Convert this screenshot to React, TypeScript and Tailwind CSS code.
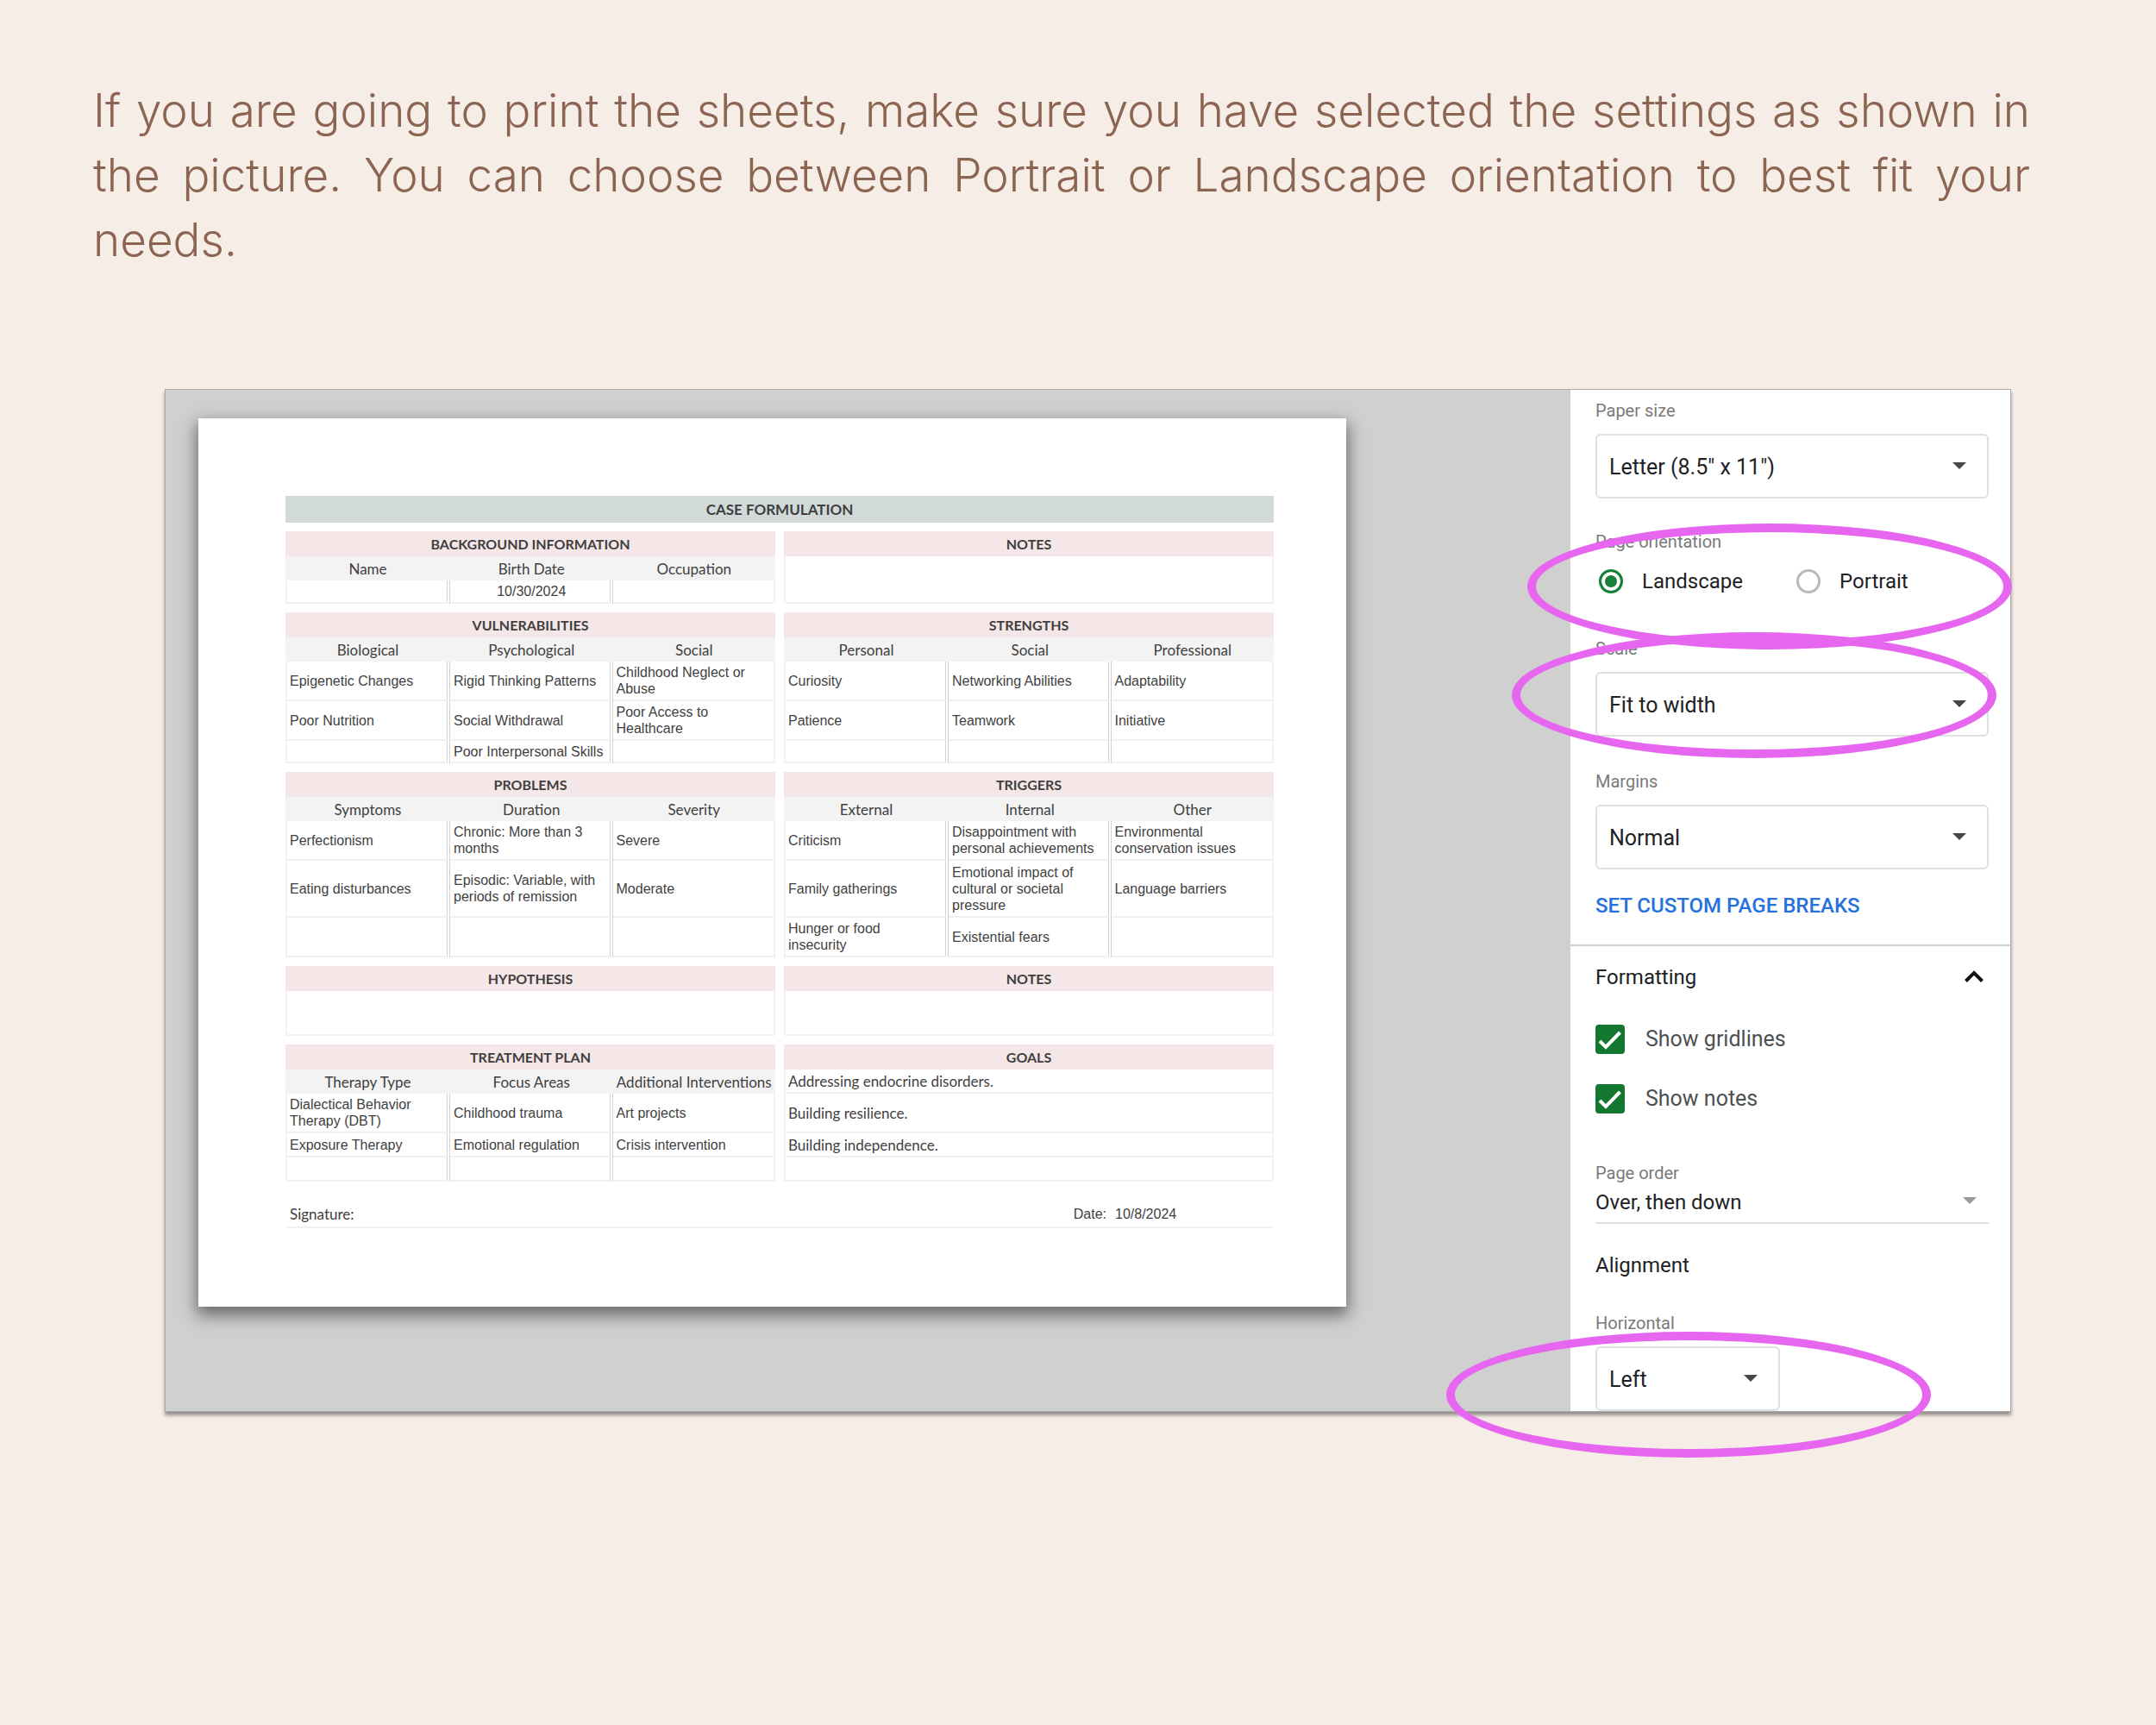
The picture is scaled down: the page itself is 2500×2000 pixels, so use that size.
import React, { useState } from 'react';

type Row = { height: string; cells: string[] };

interface SectionProps {
    title: string;
    columns?: string[];
    rows: Row[];
    centered?: boolean;
    cellFont?: string;
}

const SANS = "text-[16px] font-['Liberation_Sans',sans-serif]";
const LATO = "text-[17px] font-['Lato',sans-serif]";

const Section: React.FC<SectionProps> = ({ title, columns, rows, centered, cellFont = SANS }) => {
    const span = columns ? columns.length : 1;
    return (
        <table className="w-full table-fixed border-separate border-spacing-0 leading-[19px] text-[#3f3f3f]">
            {columns && (
                <colgroup>
                    <col className="w-[191px]" />
                    <col />
                    <col />
                </colgroup>
            )}
            <thead className="font-['Lato',sans-serif]">
                <tr className="h-[29px]">
                    <th colSpan={span} className="bg-[#f5e6e7] p-0 text-center text-[16px] font-bold">{title}</th>
                </tr>
                {columns && (
                    <tr className="h-[28px]">
                        {columns.map(c => (
                            <th key={c} scope="col" className="bg-[#f3f3f3] p-0 text-center text-[17px] font-normal whitespace-nowrap">{c}</th>
                        ))}
                    </tr>
                )}
            </thead>
            <tbody className={cellFont}>
                {rows.map((row, r) => (
                    <tr key={r} className={row.height}>
                        {row.cells.map((cell, i) => (
                            <td
                                key={i}
                                className={[
                                    'border-b-2 border-b-[#f1f1f1] py-0 align-middle',
                                    i === 0 ? 'border-l-2 border-l-[#f3f3f3] pr-2 pl-[3px]' : 'pl-1',
                                    i === row.cells.length - 1
                                        ? 'border-r-2 border-r-[#f3f3f3]'
                                        : 'border-r-4 border-r-[#d2d2d2] [border-right-style:double]',
                                    centered ? 'text-center' : 'text-left'
                                ].join(' ')}
                            >
                                {cell}
                            </td>
                        ))}
                    </tr>
                ))}
            </tbody>
        </table>
    );
};

const Sheet = () => (
    <div className="w-full max-w-[1331px] bg-white pt-[90px] pr-[84px] pb-[91px] pl-[101px] shadow-[0_8px_18px_2px_rgba(0,0,0,0.5)]">
        <h1 className="flex h-[31px] items-center justify-center bg-[#d2dad9] font-['Lato',sans-serif] text-[17px] font-bold text-[#3f3f3f]">CASE FORMULATION</h1>
        <div className="mt-[10px] grid grid-cols-2 gap-[10px]">
            <Section
                title="BACKGROUND INFORMATION"
                columns={['Name', 'Birth Date', 'Occupation']}
                rows={[{ height: 'h-[27px]', cells: ['', '10/30/2024', ''] }]}
                centered
            />
            <Section title="NOTES" rows={[{ height: 'h-[55px]', cells: [''] }]} />
            <Section
                title="VULNERABILITIES"
                columns={['Biological', 'Psychological', 'Social']}
                rows={[
                    { height: 'h-[46px]', cells: ['Epigenetic Changes', 'Rigid Thinking Patterns', 'Childhood Neglect or Abuse'] },
                    { height: 'h-[46px]', cells: ['Poor Nutrition', 'Social Withdrawal', 'Poor Access to Healthcare'] },
                    { height: 'h-[26px]', cells: ['', 'Poor Interpersonal Skills', ''] }
                ]}
            />
            <Section
                title="STRENGTHS"
                columns={['Personal', 'Social', 'Professional']}
                rows={[
                    { height: 'h-[46px]', cells: ['Curiosity', 'Networking Abilities', 'Adaptability'] },
                    { height: 'h-[46px]', cells: ['Patience', 'Teamwork', 'Initiative'] },
                    { height: 'h-[26px]', cells: ['', '', ''] }
                ]}
            />
            <Section
                title="PROBLEMS"
                columns={['Symptoms', 'Duration', 'Severity']}
                rows={[
                    { height: 'h-[46px]', cells: ['Perfectionism', 'Chronic: More than 3 months', 'Severe'] },
                    { height: 'h-[66px]', cells: ['Eating disturbances', 'Episodic: Variable, with periods of remission', 'Moderate'] },
                    { height: 'h-[46px]', cells: ['', '', ''] }
                ]}
            />
            <Section
                title="TRIGGERS"
                columns={['External', 'Internal', 'Other']}
                rows={[
                    { height: 'h-[46px]', cells: ['Criticism', 'Disappointment with personal achievements', 'Environmental conservation issues'] },
                    { height: 'h-[66px]', cells: ['Family gatherings', 'Emotional impact of cultural or societal pressure', 'Language barriers'] },
                    { height: 'h-[46px]', cells: ['Hunger or food insecurity', 'Existential fears', ''] }
                ]}
            />
            <Section title="HYPOTHESIS" rows={[{ height: 'h-[52px]', cells: [''] }]} />
            <Section title="NOTES" rows={[{ height: 'h-[52px]', cells: [''] }]} />
            <Section
                title="TREATMENT PLAN"
                columns={['Therapy Type', 'Focus Areas', 'Additional Interventions']}
                rows={[
                    { height: 'h-[46px]', cells: ['Dialectical Behavior Therapy (DBT)', 'Childhood trauma', 'Art projects'] },
                    { height: 'h-[28px]', cells: ['Exposure Therapy', 'Emotional regulation', 'Crisis intervention'] },
                    { height: 'h-[28px]', cells: ['', '', ''] }
                ]}
            />
            <Section
                title="GOALS"
                cellFont={LATO}
                rows={[
                    { height: 'h-[28px]', cells: ['Addressing endocrine disorders.'] },
                    { height: 'h-[46px]', cells: ['Building resilience.'] },
                    { height: 'h-[28px]', cells: ['Building independence.'] },
                    { height: 'h-[28px]', cells: [''] }
                ]}
            />
        </div>
        <div className="mt-6 flex h-[30px] items-center border-b-2 border-[#f1f1f1] text-[16px] text-[#3f3f3f]">
            <span className="flex-1 pl-[5px] font-['Lato',sans-serif] text-[17px]">Signature:</span>
            <span className="pr-[10px] font-['Liberation_Sans',sans-serif]">Date:</span>
            <span className="w-[184px] font-['Liberation_Sans',sans-serif]">10/8/2024</span>
        </div>
    </div>
);

const Arrow = ({ className }: { className: string }) => (
    <svg viewBox="0 0 16 8" className={`pointer-events-none absolute h-2 w-4 ${className}`} aria-hidden="true">
        <path d="M0 0h16L8 8z" fill="currentColor" />
    </svg>
);

interface SelectFieldProps {
    id: string;
    label: string;
    options: string[];
    narrow?: boolean;
}

const SelectField: React.FC<SelectFieldProps> = ({ id, label, options, narrow }) => (
    <div>
        <label htmlFor={id} className="block text-[20px] leading-6 text-[#7a7a7a]">{label}</label>
        <div className={`relative mt-[15px] ${narrow ? 'w-[214px]' : 'w-full'}`}>
            <select id={id} className="block h-[75px] w-full appearance-none rounded-md border-2 border-[#dfe0e2] bg-white pt-[2px] pr-14 pl-[14px] text-[25px] text-[#202124]">
                {options.map(o => <option key={o}>{o}</option>)}
            </select>
            <Arrow className="top-[33px] right-[26px] text-[#444746]" />
        </div>
    </div>
);

interface RadioProps {
    label: string;
    checked: boolean;
    onSelect: () => void;
}

const Radio: React.FC<RadioProps> = ({ label, checked, onSelect }) => (
    <label className="flex items-center gap-[22px] text-[24px] leading-7 text-[#202124]">
        <input
            type="radio"
            name="orientation"
            checked={checked}
            onChange={onSelect}
            className="h-7 w-7 appearance-none rounded-full border-3 border-[#b9b9b9] bg-white checked:border-[#188038] checked:bg-[#188038] checked:shadow-[inset_0_0_0_4px_white]"
        />
        {label}
    </label>
);

const CheckRow = ({ label }: { label: string }) => (
    <label className="flex items-center gap-6 text-[25px] leading-[34px] text-[#4d4f52]">
        <span className="relative h-[34px] w-[34px]">
            <input type="checkbox" defaultChecked className="peer block h-[34px] w-[34px] appearance-none rounded border-2 border-[#13772f] checked:bg-[#13772f]" />
            <svg viewBox="0 0 34 34" className="pointer-events-none absolute inset-0 hidden peer-checked:block" aria-hidden="true">
                <path d="M5 19l7 7L28.500 9" fill="none" stroke="#fff" strokeWidth="4" />
            </svg>
        </span>
        {label}
    </label>
);

// Highlight ring laid over the settings
const Ring = ({ className }: { className: string }) => (
    <div className={`pointer-events-none absolute h-[146px] w-[562px] rounded-[50%] border-10 border-[#e766f0] ${className}`} />
);

const Settings = () => {
    const [orientation, setOrientation] = useState('Landscape');
    return (
        <aside className="relative w-[510px] shrink-0 bg-white font-['Roboto',sans-serif]">
            <div className="border-b-2 border-[#cfd0d1] pt-3 pr-[25px] pb-[30px] pl-[29px]">
                <SelectField id="paper" label="Paper size" options={['Letter (8.5" x 11")', 'A4', 'Legal']} />
                <fieldset className="mt-[38px] mb-[52px]">
                    <legend className="text-[20px] leading-6 text-[#7a7a7a]">Page orientation</legend>
                    <div className="flex gap-[62px] pt-5 pl-1">
                        <Radio label="Landscape" checked={orientation === 'Landscape'} onSelect={() => setOrientation('Landscape')} />
                        <Radio label="Portrait" checked={orientation === 'Portrait'} onSelect={() => setOrientation('Portrait')} />
                    </div>
                </fieldset>
                <SelectField id="scale" label="Scale" options={['Fit to width', 'Fit to height', 'Fit to page']} />
                <div className="mt-10">
                    <SelectField id="margins" label="Margins" options={['Normal', 'Narrow', 'Wide']} />
                </div>
                <button type="button" className="mt-[27px] block text-[24px] leading-[30px] font-medium text-[#2571dd]">SET CUSTOM PAGE BREAKS</button>
            </div>
            <div className="pt-[21px] pr-[25px] pl-[29px]">
                <button type="button" className="flex w-full items-center justify-between pr-[5px] text-[24px] leading-[30px] text-[#202124]">
                    Formatting
                    <svg viewBox="0 0 24 24" className="h-6 w-6" aria-hidden="true">
                        <path d="M2.500 16.500L12 7l9.500 9.500" fill="none" stroke="#111" strokeWidth="4" />
                    </svg>
                </button>
                <div className="mt-10 flex flex-col gap-[35px]">
                    <CheckRow label="Show gridlines" />
                    <CheckRow label="Show notes" />
                </div>
                <label htmlFor="order" className="mt-[57px] block text-[20px] leading-6 text-[#7a7a7a]">Page order</label>
                <div className="relative mt-[7px]">
                    <select id="order" className="block h-10 w-full appearance-none border-b-2 border-[#e0e0e0] bg-white pb-2 text-[24px] leading-[30px] text-[#202124]">
                        <option>Over, then down</option>
                        <option>Down, then over</option>
                    </select>
                    <Arrow className="top-[9px] right-[14px] text-[#9a9a9a]" />
                </div>
                <h2 className="mt-[33px] mb-10 text-[24px] leading-[30px] text-[#202124]">Alignment</h2>
                <SelectField id="horizontal" label="Horizontal" options={['Left', 'Center', 'Right']} narrow />
            </div>
            <Ring className="top-[155px] -right-[2px]" />
            <Ring className="top-[281px] right-4" />
            <Ring className="right-[92px] -bottom-[54px]" />
        </aside>
    );
};

export default function App() {
    return (
        <div className="min-h-screen bg-[#f6ede7] pt-[91px] pb-24">
            <p className="pr-[146px] pl-[108px] font-['Inter',sans-serif] text-[53px] leading-[75px] font-light text-[#8c6552]">
                <span className="block text-justify [text-align-last:justify]">If you are going to print the sheets, make sure you have selected the settings as shown in </span>
                <span className="block text-justify [text-align-last:justify]">the picture. You can choose between Portrait or Landscape orientation to best fit your </span>
                <span className="block">needs.</span>
            </p>
            <main className="mt-[135px] pr-[168px] pl-[191px]">
                <div className="flex border border-[#a9a9a9] bg-[#d0d0d0] shadow-[0_4px_4px_rgba(0,0,0,0.4)]">
                    <div className="min-w-0 flex-1 py-[33px] pr-8 pl-[38px]">
                        <Sheet />
                    </div>
                    <Settings />
                </div>
            </main>
        </div>
    );
}
